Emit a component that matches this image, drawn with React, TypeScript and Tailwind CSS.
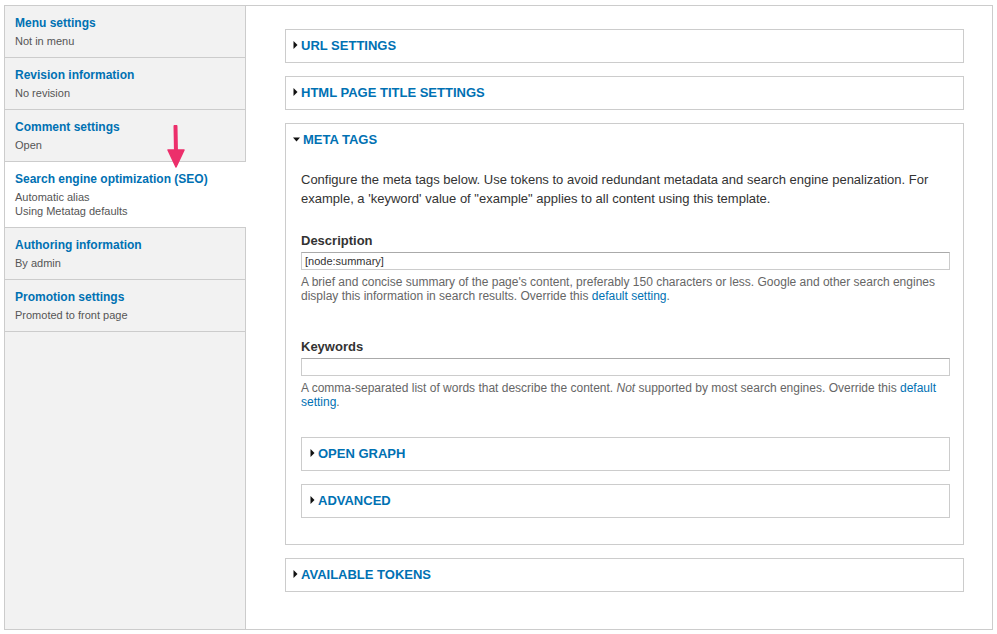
import React from "react"

const font = { fontFamily: '"Liberation Sans", Arial, sans-serif' }

const tabs = [
  { title: "Menu settings", lines: ["Not in menu"] },
  { title: "Revision information", lines: ["No revision"] },
  { title: "Comment settings", lines: ["Open"] },
  { title: "Search engine optimization (SEO)", lines: ["Automatic alias", "Using Metatag defaults"], active: true },
  { title: "Authoring information", lines: ["By admin"] },
  { title: "Promotion settings", lines: ["Promoted to front page"] },
]

function Caret({ open = false }: { open?: boolean }) {
  if (open) {
    return (
      <svg width="7" height="5" viewBox="0 0 7 5" className="mr-[3px]">
        <path d="M0 0.5 L7 0.5 L3.5 4.5 Z" fill="#111" />
      </svg>
    )
  }
  return (
    <svg width="5" height="8" viewBox="0 0 5 8" className="mr-[3px]">
      <path d="M0.5 0 L4.5 4 L0.5 8 Z" fill="#111" />
    </svg>
  )
}

function Legend({ label, open = false, inset = false }: { label: string; open?: boolean; inset?: boolean }) {
  return (
    <div className={`flex items-center h-[32px] pb-[2px] ${inset ? "pl-[8px]" : "pl-[7px]"}`}>
      <Caret open={open} />
      <span className="text-[13px] font-bold uppercase text-[#0071b3] leading-none">{label}</span>
    </div>
  )
}

function Collapsed({ label, inset = false, className = "" }: { label: string; inset?: boolean; className?: string }) {
  return (
    <div className={`border border-[#ccc] bg-white ${className}`}>
      <Legend label={label} inset={inset} />
    </div>
  )
}

export default function App() {
  return (
    <div className="w-full h-[634px] bg-white pt-[5px] pl-[4px] text-[#333]" style={font}>
      <div className="relative flex w-[989px] h-[625px] border border-[#ccc]">
        {/* vertical tabs */}
        <div className="w-[241px] shrink-0 flex flex-col bg-[#f2f2f2] border-r border-[#ccc]">
          {tabs.map((t) => (
            <div
              key={t.title}
              className={`pl-[10px] pt-[9px] pb-[9px] border-b border-[#ccc] ${t.active ? "bg-white -mr-px" : ""}`}
            >
              <div className="text-[12px] font-bold leading-[16px] text-[#0071b3]">{t.title}</div>
              <div className="mt-[3px]">
                {t.lines.map((l) => (
                  <div key={l} className="text-[11px] leading-[14px] text-[#555]">{l}</div>
                ))}
              </div>
            </div>
          ))}
        </div>

        {/* annotation arrow */}
        <svg className="absolute left-[160px] top-[119px]" width="22" height="44" viewBox="0 0 22 44">
          <path d="M10.5 1.5 L11 28" stroke="#ec2f6b" strokeWidth="4" strokeLinecap="round" />
          <path d="M3 25 L19 25 L11 42 Z" fill="#ec2f6b" strokeLinejoin="round" stroke="#ec2f6b" strokeWidth="1.5" />
        </svg>

        {/* main content */}
        <div className="flex-1 pt-[23px] pl-[39px] pr-[28px]">
          <Collapsed label="URL settings" />
          <Collapsed label="HTML page title settings" className="mt-[13px]" />

          <div className="mt-[13px] border border-[#ccc] h-[422px]">
            <Legend label="Meta tags" open />
            <div className="pl-[15px] pr-[13px] pt-[14px]">
              <p className="text-[13px] leading-[19px] text-[#333]">
                Configure the meta tags below. Use tokens to avoid redundant metadata and search engine penalization. For
                example, a 'keyword' value of "example" applies to all content using this template.
              </p>

              <div className="mt-[25px] text-[13px] font-bold leading-[16px] text-[#333]">Description</div>
              <div className="mt-[3px] h-[18px] border border-[#ccc] border-t-[#aaa] px-[3px] text-[11px] leading-[16px] text-[#333]">
                [node:summary]
              </div>
              <p className="mt-[5px] text-[12px] leading-[14px] text-[#666]">
                A brief and concise summary of the page's content, preferably 150 characters or less. Google and other search engines
                display this information in search results. Override this <span className="text-[#0071b3]">default setting</span>.
              </p>

              <div className="mt-[36px] text-[13px] font-bold leading-[16px] text-[#333]">Keywords</div>
              <div className="mt-[3px] h-[18px] border border-[#ccc] border-t-[#aaa]" />
              <p className="mt-[5px] text-[12px] leading-[14px] text-[#666]">
                A comma-separated list of words that describe the content. <em>Not</em> supported by most search engines. Override this{" "}
                <span className="text-[#0071b3]">default setting</span>.
              </p>

              <Collapsed label="Open graph" inset className="mt-[28px]" />
              <Collapsed label="Advanced" inset className="mt-[13px]" />
            </div>
          </div>

          <Collapsed label="Available tokens" className="mt-[13px]" />
        </div>
      </div>
    </div>
  )
}
